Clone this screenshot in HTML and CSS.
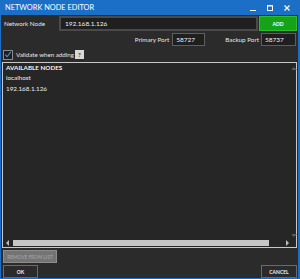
FILE: index.html
```html
<!DOCTYPE html>
<html>
<head>
<meta charset="utf-8">
<link rel="stylesheet" href="styles.css">
</head>
<body>
<div class="window">
  <div class="titlebar">
    <span class="title">NETWORK NODE EDITOR</span>
    <div class="controls">
      <svg class="ctl" width="8" height="8" viewBox="0 0 8 8"><rect x="1" y="6" width="6" height="1" fill="#fff"/></svg>
      <svg class="ctl" width="8" height="8" viewBox="0 0 8 8"><rect x="1.5" y="1.5" width="5" height="5" fill="none" stroke="#fff" stroke-width="1"/><rect x="1" y="1" width="6" height="1.5" fill="#fff"/></svg>
      <svg class="ctl" width="8" height="8" viewBox="0 0 8 8"><path d="M1.5 1.5 L6.5 6.5 M6.5 1.5 L1.5 6.5" stroke="#fff" stroke-width="1.2"/></svg>
    </div>
  </div>
  <div class="body">
    <div class="row1">
      <span class="label">Network Node</span>
      <div class="input node">192.168.1.126</div>
      <div class="btn-add">ADD</div>
    </div>
    <div class="row2">
      <span class="label">Primary Port</span>
      <div class="input port">58727</div>
      <span class="label backup">Backup Port</span>
      <div class="input port port2">58737</div>
    </div>
    <div class="row3">
      <div class="check"><svg width="9" height="9" viewBox="0 0 9 9"><path d="M1.5 4.8 L3.6 7 L7.6 1.6" fill="none" stroke="#3b8fe0" stroke-width="1.3"/></svg></div>
      <span class="label">Validate when adding</span>
      <span class="help">?</span>
    </div>
    <div class="list">
      <div class="list-content">
        <div class="list-head">AVAILABLE NODES</div>
        <div class="item">localhost</div>
        <div class="item">192.168.1.126</div>
      </div>
      <div class="vscroll">
        <span class="tri up"></span>
        <span class="tri down"></span>
      </div>
      <div class="hscroll">
        <span class="tri left"></span>
        <div class="thumb"></div>
        <span class="tri right"></span>
      </div>
      <div class="corner"></div>
    </div>
    <div class="row-remove">
      <div class="btn-remove">REMOVE FROM LIST</div>
    </div>
    <div class="row-bottom">
      <div class="btn ok">OK</div>
      <div class="btn cancel">CANCEL</div>
    </div>
  </div>
</div>
</body>
</html>
```
FILE: styles.css
```css
* { box-sizing: border-box; }
html, body { margin: 0; padding: 0; }
body {
  width: 300px;
  height: 279px;
  overflow: hidden;
  font-family: "Lato", "Open Sans", sans-serif;
  color: #f0f0f0;
}
.window {
  width: 300px;
  height: 279px;
  background: #1c6fc6;
  padding: 0 2px 2px 1px;
  display: flex;
  flex-direction: column;
}
.titlebar {
  height: 15px;
  display: flex;
  align-items: center;
  justify-content: space-between;
  padding-left: 4px;
}
.title {
  font-size: 7.4px;
  color: #fff;
  line-height: 15px;
}
.controls {
  display: flex;
  gap: 9px;
  padding-right: 7px;
  padding-top: 1px;
}
.ctl { display: block; }
.body {
  flex: 1;
  background: #2b2b2b;
  display: flex;
  flex-direction: column;
  padding: 1px 0 0 0;
}
.label {
  font-size: 6.3px;
  color: #e6e6e6;
  white-space: nowrap;
}
.row1 {
  height: 15px;
  display: flex;
  align-items: center;
  padding-left: 3px;
}
.row1 .label { width: 55px; }
.input {
  height: 100%;
  border: 1px solid #5a5a5a;
  background: #1f1f1f;
  font-size: 6.5px;
  color: #f2f2f2;
  display: flex;
  align-items: center;
  padding-left: 4px;
}
.node {
  width: 199px;
  border-width: 2px;
  border-color: #4a4a4a;
}
.btn-add {
  margin-left: 1px;
  width: 38px;
  height: 15px;
  background: #16a31a;
  border: 1px solid #2fbd2f;
  color: #fff;
  font-size: 5px;
  font-weight: bold;
  display: flex;
  align-items: center;
  justify-content: center;
}
.row2 {
  margin-top: 2px;
  height: 13px;
  display: flex;
  align-items: center;
  justify-content: flex-end;
  padding-right: 2px;
}
.row2 .label { margin-right: 3px; }
.row2 .backup { margin-left: 20px; margin-right: 2px; }
.port {
  width: 33px;
  border-color: #5e5e5e;
  padding-left: 3px;
}
.port2 { width: 35px; }
.row3 {
  margin-top: 3px;
  height: 11px;
  display: flex;
  align-items: center;
  padding-left: 2px;
}
.check {
  width: 10px;
  height: 10px;
  border: 1px solid #8a8a8a;
  background: #1e1e1e;
  display: flex;
  align-items: center;
  justify-content: center;
  margin-right: 3px;
}
.check svg { display: block; }
.row3 .label { font-size: 6.2px; }
.help {
  margin-left: 1px;
  width: 9px;
  height: 9px;
  background: #d8d8d8;
  color: #333;
  font-size: 6px;
  font-weight: bold;
  display: flex;
  align-items: center;
  justify-content: center;
}
.list {
  margin-top: 2px;
  margin-left: 1px;
  margin-right: 1px;
  height: 186px;
  border: 1px solid #c8c8c8;
  background: #262626;
  display: grid;
  grid-template-columns: 1fr 9px;
  grid-template-rows: 1fr 8px;
}
.list-content {
  padding: 0 0 0 3px;
}
.list-head {
  font-size: 6.3px;
  font-weight: bold;
  color: #f2f2f2;
  line-height: 10px;
}
.item {
  font-size: 6.3px;
  color: #eee;
  line-height: 10.5px;
}
.vscroll {
  display: flex;
  flex-direction: column;
  justify-content: space-between;
  align-items: center;
  padding: 4px 0 2px 0;
}
.tri {
  width: 0;
  height: 0;
  display: block;
}
.tri.up { border-left: 3px solid transparent; border-right: 3px solid transparent; border-bottom: 3px solid #5a5a5a; }
.tri.down { border-left: 3px solid transparent; border-right: 3px solid transparent; border-top: 3px solid #5a5a5a; }
.hscroll {
  display: flex;
  align-items: center;
  padding: 0 0 0 2px;
}
.tri.left { border-top: 3px solid transparent; border-bottom: 3px solid transparent; border-right: 3px solid #bdbdbd; margin-right: 4px; margin-left: 1px; }
.tri.right { border-top: 3px solid transparent; border-bottom: 3px solid transparent; border-left: 3px solid #bdbdbd; margin-left: 17px; }
.thumb {
  width: 256px;
  height: 6px;
  background: #c6c6c6;
}
.row-remove {
  margin-top: 2px;
  padding-left: 2px;
  height: 13px;
}
.btn-remove {
  width: 54px;
  height: 13px;
  background: #747474;
  border: 1px solid #8c8c8c;
  color: #a9a9a9;
  font-size: 4.8px;
  display: flex;
  align-items: center;
  justify-content: center;
  white-space: nowrap;
}
.row-bottom {
  margin-top: 2px;
  height: 13px;
  display: flex;
  justify-content: space-between;
  padding: 0 1px 0 2px;
}
.btn {
  height: 13px;
  border: 1px solid #6a6a6a;
  background: #2b2b2b;
  color: #f0f0f0;
  font-size: 5px;
  font-weight: bold;
  display: flex;
  align-items: center;
  justify-content: center;
}
.ok { width: 35px; }
.cancel { width: 36px; }
```
